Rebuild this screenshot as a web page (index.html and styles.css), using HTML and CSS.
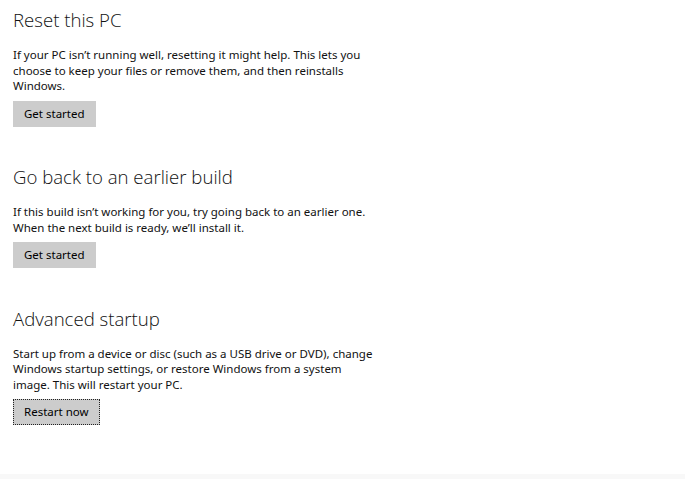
FILE: index.html
```html
<!DOCTYPE html>
<html lang="en">
<head>
    <meta charset="UTF-8">
    <meta name="viewport" content="width=device-width, initial-scale=1.0">
    <title>Recovery</title>
    <link rel="stylesheet" href="styles.css">
</head>
<body>
    <div class="page">
        <div class="settings">
            <div class="section">
                <h2 class="section-title">Reset this PC</h2>
                <p class="section-desc">If your PC isn’t running well, resetting it might help. This lets you choose to keep your files or remove them, and then reinstalls Windows.</p>
                <button class="btn">Get started</button>
            </div>

            <div class="section">
                <h2 class="section-title">Go back to an earlier build</h2>
                <p class="section-desc">If this build isn’t working for you, try going back to an earlier one. When the next build is ready, we’ll install it.</p>
                <button class="btn">Get started</button>
            </div>

            <div class="section">
                <h2 class="section-title">Advanced startup</h2>
                <p class="section-desc">Start up from a device or disc (such as a USB drive or DVD), change Windows startup settings, or restore Windows from a system image. This will restart your PC.</p>
                <button class="btn focused">Restart now</button>
            </div>
        </div>
        <div class="bottom-strip"></div>
    </div>
</body>
</html>
```

FILE: styles.css
```css
* {
    margin: 0;
    padding: 0;
    box-sizing: border-box;
}

body {
    font-family: "Noto Sans", "Open Sans", sans-serif;
    background-color: #fff;
    color: #000;
}

.page {
    display: flex;
    flex-direction: column;
    min-height: 100vh;
}

.settings {
    padding: 8px 13px 0;
}

.section + .section {
    margin-top: 38.5px;
}

.section-title {
    font-family: "Open Sans", "Noto Sans", sans-serif;
    font-size: 18.6px;
    font-weight: 300;
    line-height: 24px;
    color: #111;
}

.section-desc {
    margin-top: 15px;
    max-width: 366px;
    font-size: 11.5px;
    line-height: 15.5px;
    color: #111;
}

.btn {
    display: block;
    margin-top: 7px;
    height: 26px;
    padding: 0 10px;
    border: 1px solid #ccc;
    background-color: #ccc;
    color: #000;
    font-family: inherit;
    font-size: 11.5px;
    line-height: 24px;
    cursor: pointer;
}

.btn.focused {
    border: 1px dotted #222;
}

.bottom-strip {
    margin-top: auto;
    height: 5px;
    background-color: #f8f8f8;
}
```
